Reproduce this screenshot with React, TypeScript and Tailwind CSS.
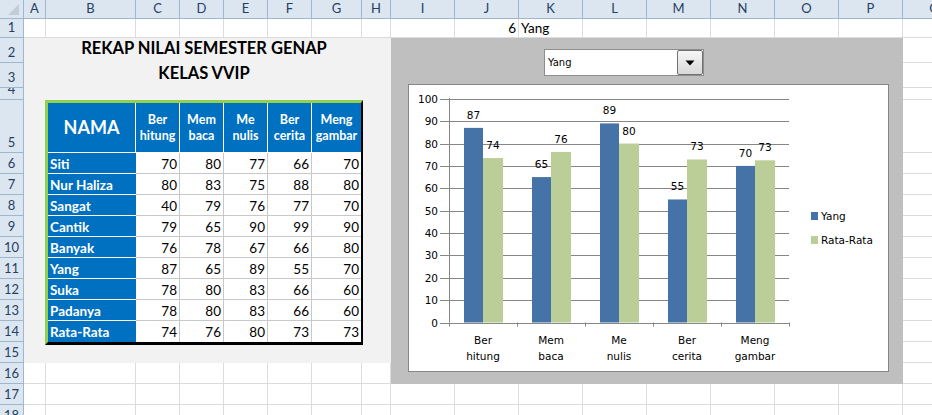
import React from "react";

const COLS = ["A", "B", "C", "D", "E", "F", "G", "H", "I", "J", "K", "L", "M", "N", "O", "P", "Q"];
const ROWS = Array.from({ length: 18 }, (_, i) => i + 1);

const GRID =
  "grid grid-cols-[24px_22px_90px_44px_44px_44px_44px_50px_29px_repeat(8,64px)_64px] grid-rows-[19px_19px_25px_25px_12px_53px_repeat(13,21px)]";

const SUBJECTS = [
  ["Ber", "hitung"],
  ["Mem", "baca"],
  ["Me", "nulis"],
  ["Ber", "cerita"],
  ["Meng", "gambar"],
];

const STUDENTS: [string, number[]][] = [
  ["Siti", [70, 80, 77, 66, 70]],
  ["Nur Haliza", [80, 83, 75, 88, 80]],
  ["Sangat", [40, 79, 76, 77, 70]],
  ["Cantik", [79, 65, 90, 99, 90]],
  ["Banyak", [76, 78, 67, 66, 80]],
  ["Yang", [87, 65, 89, 55, 70]],
  ["Suka", [78, 80, 83, 66, 60]],
  ["Padanya", [78, 80, 83, 66, 60]],
];

// averages of the 8 students, unrounded for bar heights
const AVG = SUBJECTS.map((_, i) => STUDENTS.reduce((s, [, v]) => s + v[i], 0) / STUDENTS.length);
const ROWS_WITH_AVG: [string, number[]][] = [...STUDENTS, ["Rata-Rata", AVG.map((a) => Math.round(a))]];
const SELECTED = STUDENTS[5];

function Sheet() {
  return (
    <div className={`${GRID} col-start-1 row-start-1`}>
      <div className="relative border-r border-b border-[#9eb6ce] bg-[#dce6f1]">
        <svg width="23" height="18" className="block">
          <polygon points="19,4 19,15 8,15" fill="#c3ccd8" />
        </svg>
      </div>
      {COLS.map((c) => (
        <div
          key={c}
          className="flex items-center justify-center border-r border-b border-[#9eb6ce] bg-[#dce6f1] text-[13px] text-[#27405f]"
        >
          {c}
        </div>
      ))}
      {ROWS.map((r) => (
        <React.Fragment key={r}>
          <div className="flex items-end justify-center overflow-hidden border-r border-b border-[#9eb6ce] bg-[#dce6f1] pb-[1px] text-[13px] leading-[17px] text-[#27405f]">
            {r}
          </div>
          {COLS.map((c) => (
            <div key={c} className="border-r border-b border-[#dadcdd] bg-white" />
          ))}
        </React.Fragment>
      ))}
    </div>
  );
}

function ScoreTable() {
  return (
    <div className="-ml-px grid h-[245px] w-[318px] grid-cols-[88px_44px_44px_44px_44px_49px] grid-rows-[50px_repeat(9,21px)] border-t-[3px] border-r-[2px] border-b-[3px] border-l-[3px] border-t-[#92d050] border-r-black border-b-black border-l-[#92d050]">
      <div className="flex items-center justify-center border-r border-b border-white bg-[#0070c0] text-[18px] font-bold text-white">
        NAMA
      </div>
      {SUBJECTS.map(([a, b], i) => (
        <div
          key={i}
          className={`flex flex-col items-center justify-center border-b border-white bg-[#0070c0] text-[12.5px] leading-[16px] font-bold text-white ${
            i < 4 ? "border-r" : ""
          }`}
        >
          <span>{a}</span>
          <span>{b}</span>
        </div>
      ))}
      {ROWS_WITH_AVG.map(([name, vals], r) => {
        const last = r === ROWS_WITH_AVG.length - 1;
        return (
          <React.Fragment key={name}>
            <div
              className={`flex items-center bg-[#0070c0] pt-[2px] pl-[2px] text-[13.5px] font-bold text-white ${
                last ? "" : "border-b border-white"
              }`}
            >
              {name}
            </div>
            {vals.map((v, i) => (
              <div
                key={i}
                className={`flex items-center justify-end bg-white pt-[2px] pr-[2px] text-[13.5px] text-black ${
                  last ? "" : "border-b border-[#c8c8c8]"
                } ${i < 4 ? "border-r border-r-[#c8c8c8]" : ""}`}
              >
                {v}
              </div>
            ))}
          </React.Fragment>
        );
      })}
    </div>
  );
}

function BarChart() {
  const y0 = 237.5;
  const k = 2.237;
  const left = 40;
  const cat = 68;
  const blue = "#4572a7";
  const green = "#bbce97";
  const yang = SELECTED[1];
  return (
    <svg width="479" height="286" fontFamily="'DejaVu Sans', sans-serif" fontSize="10.5" className="block">
      {Array.from({ length: 11 }, (_, i) => {
        const y = Math.round(y0 - i * 10 * k) + 0.5;
        return (
          <g key={i}>
            <line x1={31} x2={380} y1={y} y2={y} stroke="#868686" />
            <text x={29} y={y + 3.8} textAnchor="end" fill="#000">
              {i * 10}
            </text>
          </g>
        );
      })}
      <line x1={left + 0.5} x2={left + 0.5} y1={13} y2={y0} stroke="#868686" />
      {Array.from({ length: 6 }, (_, i) => (
        <line key={i} x1={left + i * cat + 0.5} x2={left + i * cat + 0.5} y1={y0} y2={y0 + 4} stroke="#868686" />
      ))}
      {SUBJECTS.map(([a, b], i) => {
        const s = left + i * cat;
        const hb = yang[i] * k;
        const hg = AVG[i] * k;
        return (
          <g key={i}>
            <rect x={s + 15} y={y0 - hb} width={19} height={hb} fill={blue} />
            <rect x={s + 34} y={y0 - hg} width={20} height={hg} fill={green} />
            <text x={s + 24.5} y={y0 - hb - 9} textAnchor="middle" fill="#000">
              {yang[i]}
            </text>
            <text x={s + 44} y={y0 - hg - 9} textAnchor="middle" fill="#000">
              {Math.round(AVG[i])}
            </text>
            <text x={s + 34} y={259} textAnchor="middle" fill="#000">
              {a}
            </text>
            <text x={s + 34} y={275} textAnchor="middle" fill="#000">
              {b}
            </text>
          </g>
        );
      })}
      <rect x={402} y={127} width={7} height={8} fill={blue} />
      <text x={412} y={135} fill="#000">
        {SELECTED[0]}
      </text>
      <rect x={402} y={151} width={7} height={8} fill={green} />
      <text x={412} y={159} fill="#000">
        Rata-Rata
      </text>
    </svg>
  );
}

export default function App() {
  return (
    <div className="grid h-[415px] w-[932px] overflow-hidden bg-white font-['Lato',sans-serif]">
      <Sheet />
      <div className={`${GRID} col-start-1 row-start-1`}>
        {/* fill of A2:H15 */}
        <div className="col-start-2 col-end-10 row-start-3 row-end-17 bg-[#f2f2f2]" />
        <div className="col-start-3 col-end-9 row-start-3 flex items-end justify-center pb-[2px] text-[16.5px] font-bold text-black">
          REKAP NILAI SEMESTER GENAP
        </div>
        <div className="col-start-3 col-end-9 row-start-4 flex items-end justify-center pb-[2px] text-[16.5px] font-bold text-black">
          KELAS VVIP
        </div>
        <div className="col-start-3 col-end-9 row-start-6 row-end-16">
          <ScoreTable />
        </div>

        <div className="col-start-11 row-start-2 flex items-end justify-end pr-[3px] text-[13.5px] text-black">6</div>
        <div className="col-start-12 row-start-2 flex items-end pl-[2px] text-[13.5px] text-black">
          {SELECTED[0]}
        </div>

        {/* chart object over I2:P16 */}
        <div className="col-start-10 col-end-18 row-start-3 row-end-18 flex flex-col bg-[#bfbfbf] pt-[11px] pl-[17px]">
          <div className="ml-[136px] flex h-[27px] w-[160px] items-stretch border border-[#8e8e8e] bg-white">
            <div className="flex flex-1 items-center pl-[3px] font-['DejaVu_Sans',sans-serif] text-[10px] text-black">
              {SELECTED[0]}
            </div>
            <div className="flex w-[26px] items-center justify-center rounded-[2px] border border-[#707070] bg-gradient-to-b from-[#f6f6f6] to-[#d9d9d9]">
              <svg width="10" height="6">
                <polygon points="0.5,0.5 9.5,0.5 5,5.5" fill="#000" />
              </svg>
            </div>
          </div>
          <div className="mt-[8px] h-[288px] w-[481px] border border-[#868686] bg-white">
            <BarChart />
          </div>
        </div>
      </div>
    </div>
  );
}
